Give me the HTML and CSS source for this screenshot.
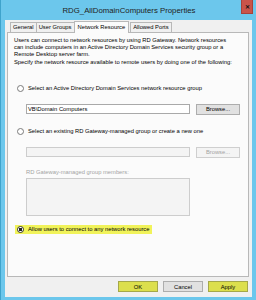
FILE: index.html
```html
<!DOCTYPE html>
<html lang="en">
<head>
<meta charset="UTF-8">
<title>RDG_AllDomainComputers Properties</title>
<link rel="stylesheet" href="styles.css">
</head>
<body>
<div class="window">
  <div class="titlebar">
    <span></span>
    <span class="title">RDG_AllDomainComputers Properties</span>
    <span class="close">&#x2715;</span>
  </div>
  <div class="client">
    <div class="tabs">
      <span class="tab">General</span>
      <span class="tab">User Groups</span>
      <span class="tab active">Network Resource</span>
      <span class="tab">Allowed Ports</span>
    </div>
    <div class="panel">
      <p class="intro">Users can connect to network resources by using RD Gateway. Network resources<br>can include computers in an Active Directory Domain Services security group or a<br>Remote Desktop server farm.</p>
      <p class="intro">Specify the network resource available to remote users by doing one of the following:</p>

      <label class="radio first"><span class="dot"></span>Select an Active Directory Domain Services network resource group</label>
      <div class="field">
        <span class="textbox">VB\Domain Computers</span>
        <span class="button">Browse...</span>
      </div>

      <label class="radio"><span class="dot"></span>Select an existing RD Gateway-managed group or create a new one</label>
      <div class="field">
        <span class="textbox disabled"></span>
        <span class="button disabled">Browse...</span>
      </div>
      <div class="members">RD Gateway-managed group members:</div>
      <div class="listbox"></div>

      <label class="radio last"><span class="mark"><span class="dot checked"></span>Allow users to connect to any network resource</span></label>
    </div>
    <div class="actions">
      <span class="button action hl">OK</span>
      <span class="button action">Cancel</span>
      <span class="button action hl">Apply</span>
    </div>
  </div>
</div>
</body>
</html>
```
FILE: styles.css
```css
body {
  margin: 0;
  font-family: "Liberation Sans", Arial, sans-serif;
  font-size: 5.8px;
  color: #000;
}
.window {
  width: 256px;
  height: 300px;
  box-sizing: border-box;
  background: #6cc7ec;
  border-left: 1px solid #3fa3cc;
  display: flex;
  flex-direction: column;
}
.titlebar {
  height: 20px;
  display: grid;
  grid-template-columns: 1fr auto 1fr;
  align-items: start;
}
.title {
  font-size: 7.8px;
  color: #222;
  line-height: 21px;
  padding-left: 1px;
}
.close {
  justify-self: end;
  width: 12px;
  height: 14px;
  margin-right: 3px;
  background: #c9544a;
  border: 1px solid #a8423a;
  border-top: 0;
  box-sizing: border-box;
  color: #111;
  font-size: 6px;
  font-weight: bold;
  display: flex;
  align-items: center;
  justify-content: center;
}
.client {
  flex: 1;
  margin: 0 4px 3px 4px;
  background: #f0f0f0;
  padding: 3px 3px 5px 2px;
  display: flex;
  flex-direction: column;
}
.tabs {
  display: flex;
  align-items: flex-end;
  margin-left: 3px;
  height: 9px;
  position: relative;
  z-index: 1;
}
.tab {
  height: 10px;
  line-height: 9px;
  padding: 0 2px;
  border: 1px solid #b8b8b8;
  border-bottom: 0;
  box-sizing: border-box;
  background: #f0f0f0;
  margin-right: -1px;
}
.tab.active {
  height: 12px;
  line-height: 11px;
  background: #fbfbfb;
  margin: 0 1px 0 0;
  padding: 0 3px;
  margin-bottom: -1px;
}
.panel {
  flex: 1;
  border: 1px solid #b8b8b8;
  background: #fbfbfb;
  padding: 4px 6px 0 6px;
}
.intro {
  margin: 0;
  line-height: 7.2px;
  white-space: nowrap;
}
.radio {
  display: flex;
  align-items: center;
  height: 9px;
  margin-left: 3px;
}
.radio.first {
  margin-top: 18px;
}
.radio.last {
  margin-top: 9px;
  margin-left: 1px;
}
.dot {
  width: 7px;
  height: 7px;
  box-sizing: border-box;
  border: 1px solid #7a7a7a;
  border-radius: 50%;
  background: #fff;
  margin-right: 4px;
  flex: none;
}
.dot.checked {
  background: radial-gradient(circle, #222 0 1.6px, #fff 1.9px);
  border-color: #333;
}
.mark {
  display: flex;
  align-items: center;
  background: #f1f35a;
  padding: 0 3px 0 2px;
  height: 9px;
}
.field {
  display: flex;
  gap: 6px;
  align-items: center;
  margin: 11px 0 0 12px;
}
.field + .radio {
  margin-top: 12px;
}
.textbox {
  width: 164px;
  height: 10px;
  box-sizing: border-box;
  border: 1px solid #a9a9a9;
  background: #fff;
  line-height: 8px;
  padding-left: 1px;
}
.textbox.disabled {
  background: #f4f4f4;
  border-color: #cdcdcd;
}
.button {
  width: 44px;
  height: 11px;
  box-sizing: border-box;
  border: 1px solid #adadad;
  background: #e1e1e1;
  display: flex;
  align-items: center;
  justify-content: center;
}
.button.disabled {
  color: #a3a3a3;
  border-color: #cfcfcf;
  background: #f4f4f4;
}
.members {
  margin: 11px 0 0 12px;
  color: #a3a3a3;
  line-height: 7px;
}
.listbox {
  margin: 2px 0 0 12px;
  width: 164px;
  height: 38px;
  box-sizing: border-box;
  border: 1px solid #cdcdcd;
  background: #f4f4f4;
}
.actions {
  display: flex;
  justify-content: flex-end;
  gap: 5px;
  margin-top: 4px;
  padding-right: 1px;
}
.action {
  width: 40px;
}
.hl {
  background: #dcdf4d;
  border-color: #a5a84a;
}
```
